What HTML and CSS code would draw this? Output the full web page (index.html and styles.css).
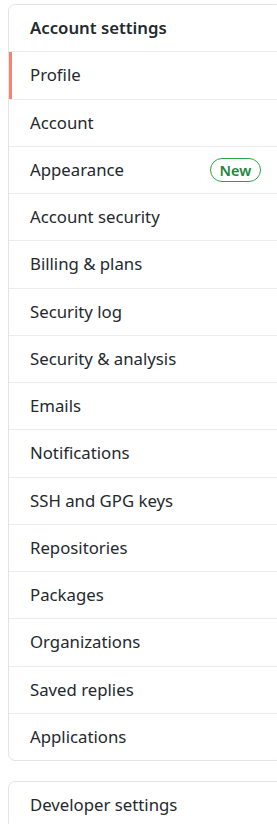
FILE: index.html
```html
<!DOCTYPE html>
<html lang="en">

<head>
    <meta charset="UTF-8">
    <meta name="viewport" content="width=device-width, initial-scale=1.0">
    <title>Settings</title>
    <link rel="stylesheet" href="styles.css">
</head>

<body>
    <nav class="menu">
        <h3 class="menuHeading">Account settings</h3>
        <a class="menuItem selected" href="#">Profile</a>
        <a class="menuItem" href="#">Account</a>
        <a class="menuItem" href="#">Appearance <span class="label">New</span></a>
        <a class="menuItem" href="#">Account security</a>
        <a class="menuItem" href="#">Billing &amp; plans</a>
        <a class="menuItem" href="#">Security log</a>
        <a class="menuItem" href="#">Security &amp; analysis</a>
        <a class="menuItem" href="#">Emails</a>
        <a class="menuItem" href="#">Notifications</a>
        <a class="menuItem" href="#">SSH and GPG keys</a>
        <a class="menuItem" href="#">Repositories</a>
        <a class="menuItem" href="#">Packages</a>
        <a class="menuItem" href="#">Organizations</a>
        <a class="menuItem" href="#">Saved replies</a>
        <a class="menuItem" href="#">Applications</a>
    </nav>

    <nav class="menu">
        <a class="menuItem" href="#">Developer settings</a>
    </nav>
</body>

</html>
```

FILE: styles.css
```css
html {
    overflow: hidden;
}

body {
    margin: 4px 0 0 8px;
    width: 275px;
    font-family: "Noto Sans", sans-serif;
    font-size: 16.75px;
    line-height: 26.25px;
    color: #24292e;
    background-color: white;
}

.menu {
    border: 1.25px solid #e1e4e8;
    border-radius: 7px;
    margin-bottom: 20px;
    overflow: hidden;
}

.menuHeading {
    margin: 0;
    padding: 10px 20px 10px 21px;
    font-size: 16.75px;
    line-height: 26.25px;
    font-weight: 600;
    border-bottom: 1.25px solid #eaecef;
}

.menuItem {
    position: relative;
    display: flex;
    justify-content: space-between;
    align-items: center;
    padding: 10px 20px 10px 21px;
    color: #24292e;
    text-decoration: none;
    border-bottom: 1.25px solid #eaecef;
}

.menuItem:last-child {
    border-bottom: none;
}

.menuItem.selected::before {
    content: "";
    position: absolute;
    top: 0;
    bottom: 0;
    left: 0;
    width: 2.5px;
    background-color: #f9826c;
}

.label {
    margin-right: 1px;
    padding: 0 8.75px;
    font-size: 14.5px;
    font-weight: 600;
    line-height: 22.5px;
    color: #22863a;
    border: 1.25px solid #28a745;
    border-radius: 2em;
}
```
